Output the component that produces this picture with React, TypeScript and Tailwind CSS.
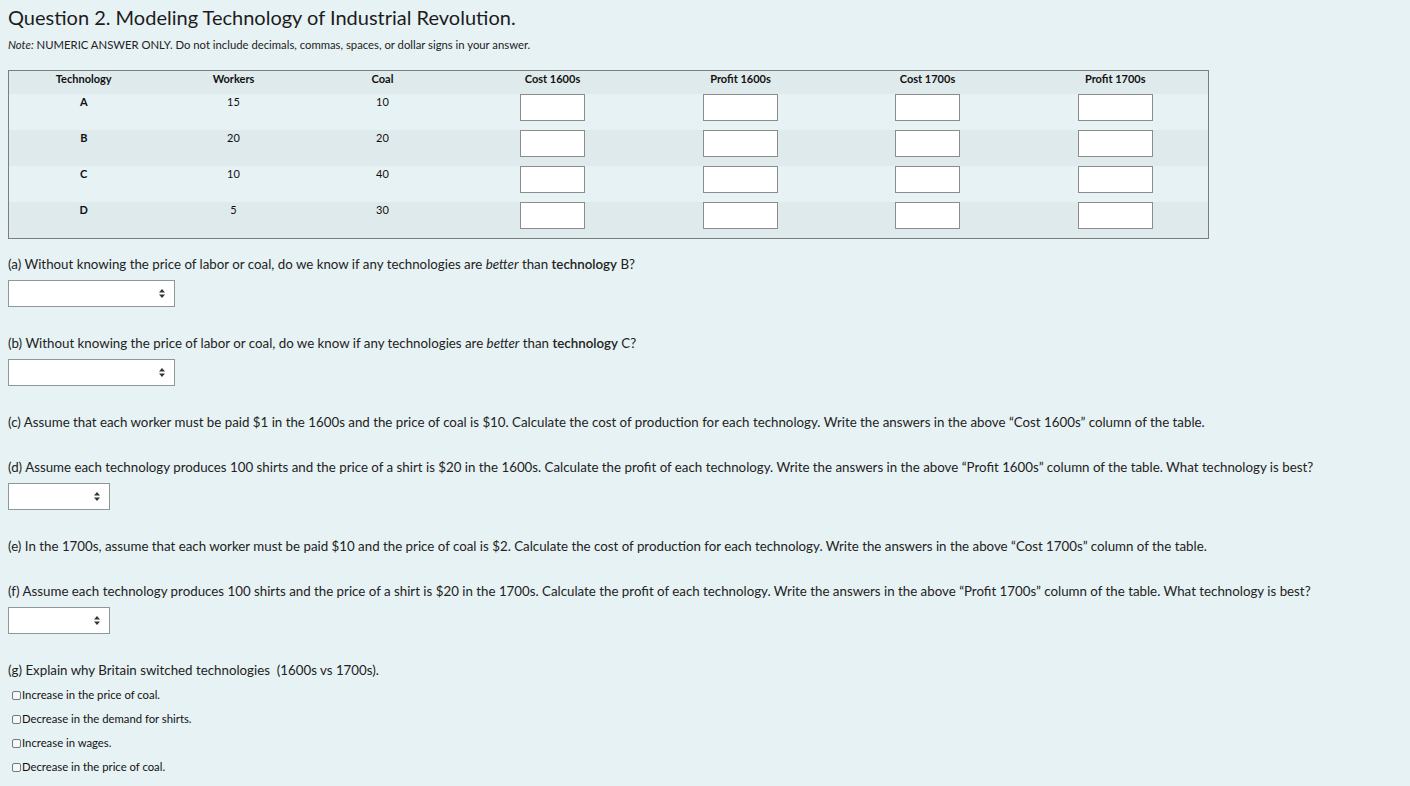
const rows = [
  { tech: "A", workers: "15", coal: "10" },
  { tech: "B", workers: "20", coal: "20" },
  { tech: "C", workers: "10", coal: "40" },
  { tech: "D", workers: "5", coal: "30" },
];

const font = { fontFamily: "Lato, 'Open Sans', sans-serif" };

const Arrows = () => (
  <svg width="6" height="9" viewBox="0 0 6 9" className="fill-[#333]">
    <path d="M3 0 L6 3.5 L0 3.5 Z" />
    <path d="M0 5.5 L6 5.5 L3 9 Z" />
  </svg>
);

const Select = ({ wide }: { wide?: boolean }) => (
  <div
    className={`mt-[7px] h-[27px] bg-white border border-[#8f979a] flex items-center justify-end pr-[9px] ${
      wide ? "w-[167px]" : "w-[102px]"
    }`}
  >
    <Arrows />
  </div>
);

const Box = ({ w }: { w: string }) => (
  <div className={`mx-auto h-[27px] bg-white border border-[#8c8c8c] ${w}`} />
);

const Q = ({ children, first }: { children: React.ReactNode; first?: boolean }) => (
  <p className={`${first ? "mt-[16px]" : "mt-[27px]"} h-[18px] leading-[18px] text-[13.3px] text-[#222]`}>
    {children}
  </p>
);

const App = () => {
  return (
    <div className="min-h-screen bg-[#e7f2f4] px-2 pt-[3px] pb-4" style={font}>
      <h1 className="text-[20px] leading-[28px] text-[#1c1c1c]">
        Question 2. Modeling Technology of Industrial Revolution.
      </h1>
      <p className="mt-[7px] text-[11.3px] leading-[14px] text-[#222]">
        <i>Note:</i> NUMERIC ANSWER ONLY. Do not include decimals, commas, spaces, or dollar signs in your answer.
      </p>

      <table className="mt-[18px] w-[1200px] border border-[#7d7d7d] border-collapse table-fixed text-[11px] text-[#111]">
        <colgroup>
          <col className="w-[150px]" />
          <col className="w-[150px]" />
          <col className="w-[148px]" />
          <col className="w-[192px]" />
          <col className="w-[184px]" />
          <col className="w-[190px]" />
          <col className="w-[186px]" />
        </colgroup>
        <thead>
          <tr className="h-[23px] bg-[#dfeaec] font-bold">
            <th className="pb-[6px]">Technology</th>
            <th className="pb-[6px]">Workers</th>
            <th className="pb-[6px]">Coal</th>
            <th className="pb-[6px]">Cost 1600s</th>
            <th className="pb-[6px]">Profit 1600s</th>
            <th className="pb-[6px]">Cost 1700s</th>
            <th className="pb-[6px]">Profit 1700s</th>
          </tr>
        </thead>
        <tbody>
          {rows.map((r, i) => (
            <tr key={r.tech} className={`h-[36px] ${i % 2 ? "bg-[#dfeaec]" : "bg-[#e7f2f4]"}`}>
              <td className="align-top text-center font-bold">{r.tech}</td>
              <td className="align-top text-center">{r.workers}</td>
              <td className="align-top text-center">{r.coal}</td>
              <td className="align-top pb-[9px]">
                <Box w="w-[65px]" />
              </td>
              <td className="align-top pb-[9px]">
                <Box w="w-[75px]" />
              </td>
              <td className="align-top pb-[9px]">
                <Box w="w-[65px]" />
              </td>
              <td className="align-top pb-[9px]">
                <Box w="w-[75px]" />
              </td>
            </tr>
          ))}
        </tbody>
      </table>

      <Q first>
        (a) Without knowing the price of labor or coal, do we know if any technologies are <i>better</i> than{" "}
        <b className="font-semibold">technology</b> B?
      </Q>
      <Select wide />
      <Q>
        (b) Without knowing the price of labor or coal, do we know if any technologies are <i>better</i> than{" "}
        <b className="font-semibold">technology</b> C?
      </Q>
      <Select wide />
      <Q>
        (c) Assume that each worker must be paid $1 in the 1600s and the price of coal is $10. Calculate the cost of
        production for each technology. Write the answers in the above “Cost 1600s” column of the table.
      </Q>
      <Q>
        (d) Assume each technology produces 100 shirts and the price of a shirt is $20 in the 1600s. Calculate the
        profit of each technology. Write the answers in the above “Profit 1600s” column of the table. What technology
        is best?
      </Q>
      <Select />
      <Q>
        (e) In the 1700s, assume that each worker must be paid $10 and the price of coal is $2. Calculate the cost of
        production for each technology. Write the answers in the above “Cost 1700s” column of the table.
      </Q>
      <Q>
        (f) Assume each technology produces 100 shirts and the price of a shirt is $20 in the 1700s. Calculate the
        profit of each technology. Write the answers in the above “Profit 1700s” column of the table. What technology
        is best?
      </Q>
      <Select />
      <Q>(g) Explain why Britain switched technologies&nbsp; (1600s vs 1700s).</Q>
      <div className="mt-[5px] flex flex-col text-[11.3px] text-[#111]">
        {[
          "Increase in the price of coal.",
          "Decrease in the demand for shirts.",
          "Increase in wages.",
          "Decrease in the price of coal.",
        ].map((t) => (
          <label key={t} className="h-[24px] flex items-center">
            <span className="ml-[4px] mr-[1px] w-[9px] h-[9px] rounded-[2px] border border-[#777] bg-[#f4f8f9]" />
            {t}
          </label>
        ))}
      </div>
    </div>
  );
};

export default App;
